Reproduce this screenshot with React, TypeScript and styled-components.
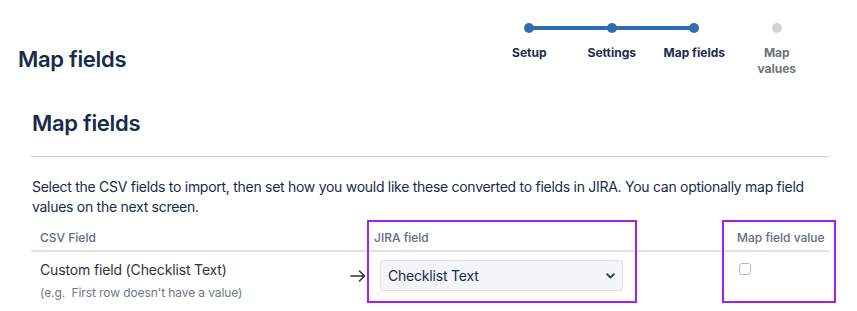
import React from "react";
import styled, { createGlobalStyle } from "styled-components";

const GlobalStyle = createGlobalStyle`
  html, body { margin: 0; padding: 0; background: #ffffff; }
  body {
    font-family: Inter, "Noto Sans", "Liberation Sans", sans-serif;
    color: #172b4d;
    -webkit-font-smoothing: antialiased;
  }
  * { box-sizing: border-box; }
`;

const Page = styled.div`
  width: 857px;
  height: 311px;
  overflow: hidden;
`;

const PageHeader = styled.header`
  display: flex;
  justify-content: space-between;
  align-items: flex-start;
  padding: 23px 39px 0 18px;
`;

const PageTitle = styled.h1`
  margin: 21.5px 0 0;
  font-size: 22px;
  line-height: 28px;
  font-weight: 600;
  color: #172b4d;
  letter-spacing: -0.3px;
`;

const Tracker = styled.ol`
  display: flex;
  margin: 0;
  padding: 0;
  list-style: none;
`;

const Step = styled.li<{ $connector?: boolean }>`
  position: relative;
  width: 82.5px;
  display: flex;
  flex-direction: column;
  align-items: center;

  &::before {
    content: "";
    display: ${(p) => (p.$connector ? "block" : "none")};
    position: absolute;
    top: 3px;
    left: -50%;
    right: 50%;
    height: 4px;
    background: #2f6db3;
  }
`;

const Dot = styled.span<{ $done?: boolean }>`
  position: relative;
  width: 10px;
  height: 10px;
  border-radius: 50%;
  background: ${(p) => (p.$done ? "#2f6db3" : "#cfd2d6")};
`;

const StepLabel = styled.span<{ $done?: boolean }>`
  margin-top: 12px;
  font-size: 12px;
  line-height: 16px;
  font-weight: 700;
  text-align: center;
  white-space: nowrap;
  color: ${(p) => (p.$done ? "#172b4d" : "#6b7280")};
`;

const Content = styled.main`
  padding: 32px 28px 0 31px;
`;

const SectionHeader = styled.div`
  padding-bottom: 19px;
  border-bottom: 1px solid #cccccc;
`;

const SectionTitle = styled.h2`
  margin: 0;
  padding-left: 1px;
  font-size: 22px;
  line-height: 28px;
  font-weight: 600;
  color: #172b4d;
  letter-spacing: -0.3px;
`;

const Intro = styled.p`
  margin: 20px 0 0;
  padding-left: 1px;
  font-size: 14px;
  line-height: 20px;
  color: #172b4d;
  letter-spacing: -0.28px;
`;

const Table = styled.div`
  position: relative;
  margin-top: 6px;
`;

const Row = styled.div<{ $head?: boolean }>`
  display: grid;
  grid-template-columns: 312px 27px 357px 1fr;
  border-bottom: ${(p) => (p.$head ? "2px solid #dfe1e6" : "none")};
`;

const HeadCell = styled.div<{ $pad: number }>`
  padding: 7px 0 4px ${(p) => p.$pad}px;
  font-size: 12px;
  line-height: 16px;
  font-weight: 500;
  color: #5e6c84;
  white-space: nowrap;
`;

const Cell = styled.div<{ $pad: number }>`
  padding: 8px 0 0 ${(p) => p.$pad}px;
  display: flex;
  flex-direction: column;
  align-items: flex-start;
`;

const FieldName = styled.span`
  font-size: 14px;
  line-height: 20px;
  color: #333333;
  letter-spacing: -0.15px;
`;

const FieldExample = styled.span`
  margin-top: 5px;
  font-size: 12px;
  line-height: 16px;
  color: #6b778c;
  letter-spacing: -0.1px;
`;

const ArrowIcon = styled.svg`
  margin-top: 10px;
  display: block;
`;

const SelectWrap = styled.div`
  position: relative;
  width: 243px;
`;

const Select = styled.select`
  appearance: none;
  -webkit-appearance: none;
  width: 100%;
  height: 31px;
  margin: 0;
  padding: 0 28px 0 7px;
  border: 1px solid #dfe1e6;
  border-radius: 3px;
  background: #f4f5f7;
  font-family: inherit;
  font-size: 14px;
  line-height: 20px;
  letter-spacing: -0.2px;
  color: #172b4d;
  outline: none;
`;

const Chevron = styled.svg`
  position: absolute;
  right: 8px;
  top: 13px;
  pointer-events: none;
`;

const Checkbox = styled.input`
  appearance: none;
  -webkit-appearance: none;
  margin: 3px 0 0;
  width: 12px;
  height: 12px;
  border: 1px solid #b3bac5;
  border-radius: 3px;
  background: #ffffff;
`;

const Highlight = styled.div<{ $left: number; $width: number }>`
  position: absolute;
  top: -3px;
  left: ${(p) => p.$left}px;
  width: ${(p) => p.$width}px;
  height: 83px;
  border: 2px solid #a21ff0;
  pointer-events: none;
`;

const steps = [
  { label: "Setup", done: true },
  { label: "Settings", done: true },
  { label: "Map fields", done: true },
  { label: "Map values", done: false },
];

export default function App() {
  return (
    <Page>
      <GlobalStyle />
      <PageHeader>
        <PageTitle>Map fields</PageTitle>
        <Tracker>
          {steps.map((s, i) => (
            <Step key={s.label} $connector={i > 0 && s.done}>
              <Dot $done={s.done} />
              <StepLabel $done={s.done}>
                {s.label === "Map values" ? (
                  <>
                    Map
                    <br />
                    values
                  </>
                ) : (
                  s.label
                )}
              </StepLabel>
            </Step>
          ))}
        </Tracker>
      </PageHeader>
      <Content>
        <SectionHeader>
          <SectionTitle>Map fields</SectionTitle>
        </SectionHeader>
        <Intro>
          Select the CSV fields to import, then set how you would like these converted to fields in JIRA. You can
          optionally map field values on the next screen.
        </Intro>
        <Table>
          <Row $head>
            <HeadCell $pad={9}>CSV Field</HeadCell>
            <HeadCell $pad={0} />
            <HeadCell $pad={4}>JIRA field</HeadCell>
            <HeadCell $pad={10}>Map field value</HeadCell>
          </Row>
          <Row>
            <Cell $pad={9}>
              <FieldName>Custom field (Checklist Text)</FieldName>
              <FieldExample>(e.g.&nbsp; First row doesn't have a value)</FieldExample>
            </Cell>
            <Cell $pad={7}>
              <ArrowIcon width="16" height="12" viewBox="0 0 16 12" fill="none">
                <path
                  d="M1 6H14.5M9.5 1L14.5 6L9.5 11"
                  stroke="#333333"
                  strokeWidth="1.6"
                  strokeLinecap="round"
                  strokeLinejoin="round"
                />
              </ArrowIcon>
            </Cell>
            <Cell $pad={10}>
              <SelectWrap>
                <Select defaultValue="checklist">
                  <option value="checklist">Checklist Text</option>
                </Select>
                <Chevron width="9" height="6" viewBox="0 0 9 6" fill="none">
                  <path d="M1.2 1.2L4.5 4.5L7.8 1.2" stroke="#344563" strokeWidth="2" strokeLinecap="round" strokeLinejoin="round" />
                </Chevron>
              </SelectWrap>
            </Cell>
            <Cell $pad={12}>
              <Checkbox type="checkbox" />
            </Cell>
          </Row>
          <Highlight $left={336} $width={270} />
          <Highlight $left={691} $width={114} />
        </Table>
      </Content>
    </Page>
  );
}
